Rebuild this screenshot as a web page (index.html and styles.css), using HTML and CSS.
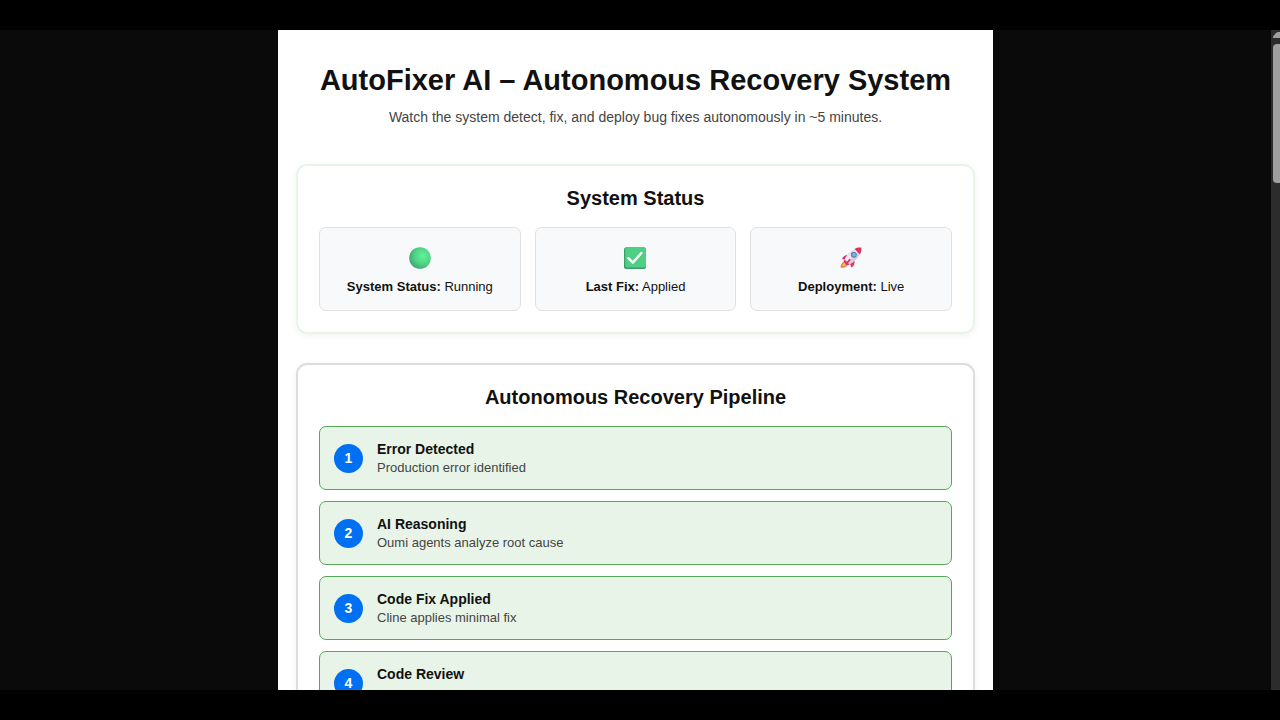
FILE: index.html
```html
<!DOCTYPE html>
<html lang="en">
<head>
  <meta charset="UTF-8">
  <meta name="viewport" content="width=device-width, initial-scale=1.0">
  <title>AutoFixer AI</title>
  <link rel="stylesheet" href="styles.css">
</head>
<body>
  <div class="screen">
    <main class="page">
      <header class="header">
        <h1>AutoFixer AI – Autonomous Recovery System</h1>
        <p>Watch the system detect, fix, and deploy bug fixes autonomously in ~5 minutes.</p>
      </header>

      <section class="card card-status">
        <h2>System Status</h2>
        <div class="status-grid">
          <div class="status-item">
            <svg class="status-icon" viewBox="0 0 24 24" aria-hidden="true">
              <defs>
                <radialGradient id="ball" cx="0.64" cy="0.4" r="0.74">
                  <stop offset="0" stop-color="#62f09a"/>
                  <stop offset="0.5" stop-color="#4fd585"/>
                  <stop offset="0.85" stop-color="#43aa74"/>
                  <stop offset="1" stop-color="#4b8b7c"/>
                </radialGradient>
              </defs>
              <circle cx="12" cy="12" r="10.8" fill="url(#ball)"/>
            </svg>
            <p><strong>System Status:</strong> Running</p>
          </div>
          <div class="status-item">
            <svg class="status-icon" viewBox="0 0 24 24" aria-hidden="true">
              <rect x="1" y="1.2" width="22" height="21.8" rx="2.6" fill="#3d9c6c"/>
              <rect x="2.2" y="1.2" width="20.8" height="20.4" rx="2.2" fill="#4fcf83"/>
              <path d="M5.4 12.2l4.4 4.4 8.6-9.6" fill="none" stroke="#fff" stroke-width="2.4" stroke-linecap="round" stroke-linejoin="round"/>
            </svg>
            <p><strong>Last Fix:</strong> Applied</p>
          </div>
          <div class="status-item">
            <svg class="status-icon" viewBox="0 0 24 24" aria-hidden="true">
              <path d="M5.4 15.6C3 16.2 1.6 18.6 1.6 21.8c3.4 0 6-.8 7-3.4z" fill="#f0803c"/>
              <path d="M5.8 16.6c-1.4.6-2.2 1.8-2.3 3.3 1.7 0 3-.6 3.7-2z" fill="#fbbf55"/>
              <path d="M9.4 9C6.4 8.8 4 10.4 3 13l4 1z" fill="#e0376b"/>
              <path d="M15.4 14.4c.6 3.2-.6 5.8-3 7.2l-1.8-4.6z" fill="#e0376b"/>
              <path d="M21.8 2.2C15 2.4 9 6 5.6 13.4l5 5c7.4-3.6 11-9.4 11.2-16.2z" fill="#dccbe0"/>
              <path d="M21.8 2.2C15.4 3 9.6 6.6 5.6 13.4l2.8 2.8c4-4 9.4-9.2 13.4-14z" fill="#f0e8f3"/>
              <path d="M22.4 1.6c-2.6-.2-4.8.2-6.8 1.4l5.4 5.4c1.2-2 1.6-4.2 1.4-6.8z" fill="#db3459"/>
              <path d="M5.6 13.4l-1 2.4 3.6 3.6 2.4-1z" fill="#d43768"/>
              <path d="M10.6 13.8l-3.4 4" stroke="#e0376b" stroke-width="1.8" stroke-linecap="round"/>
              <circle cx="14.8" cy="8.8" r="3" fill="#5c82b4"/>
              <circle cx="15" cy="8.8" r="1.8" fill="#7eb9e8"/>
            </svg>
            <p><strong>Deployment:</strong> Live</p>
          </div>
        </div>
      </section>

      <section class="card">
        <h2>Autonomous Recovery Pipeline</h2>
        <ol class="pipeline">
          <li class="step">
            <span class="step-number">1</span>
            <div class="step-text">
              <h3>Error Detected</h3>
              <p>Production error identified</p>
            </div>
          </li>
          <li class="step">
            <span class="step-number">2</span>
            <div class="step-text">
              <h3>AI Reasoning</h3>
              <p>Oumi agents analyze root cause</p>
            </div>
          </li>
          <li class="step">
            <span class="step-number">3</span>
            <div class="step-text">
              <h3>Code Fix Applied</h3>
              <p>Cline applies minimal fix</p>
            </div>
          </li>
          <li class="step">
            <span class="step-number">4</span>
            <div class="step-text">
              <h3>Code Review</h3>
            </div>
          </li>
        </ol>
      </section>
    </main>

    <div class="scrollbar" aria-hidden="true">
      <svg class="scroll-arrow" viewBox="0 0 8 8"><path d="M0 7V5.5L3 2Q4 1 5 1h3v6z" fill="#a0a0a0"/></svg>
      <div class="scroll-thumb"></div>
    </div>
  </div>
</body>
</html>
```

FILE: styles.css
```css
* {
  box-sizing: border-box;
}

body {
  margin: 0;
  padding: 30px 0;
  height: 100vh;
  background: #000;
  color: #111;
  font-family: Arial, "Liberation Sans", sans-serif;
  overflow: hidden;
}

h1, h2, h3, p {
  margin: 0;
}

.screen {
  display: flex;
  height: 100%;
  overflow: hidden;
  background: #0a0a0a;
}

.page {
  width: 100%;
  max-width: 715px;
  height: max-content;
  margin: 0 auto;
  padding: 32px 18px;
  background: #fff;
}

.header {
  margin-bottom: 36px;
  text-align: center;
}

.header h1 {
  margin-bottom: 8px;
  font-size: 29px;
  line-height: 36px;
}

.header p {
  color: #444;
  font-size: 14px;
  line-height: 22px;
}

.card {
  margin-bottom: 29px;
  padding: 21px;
  border: 2px solid #ddd;
  border-radius: 11px;
  box-shadow: 0 2px 7px rgba(0, 0, 0, 0.05);
}

.card-status {
  border-color: #e8f4e8;
}

.card h2 {
  margin-bottom: 18px;
  font-size: 20px;
  line-height: 22px;
  text-align: center;
}

.status-grid {
  display: grid;
  grid-template-columns: repeat(3, 1fr);
  gap: 14px;
}

.status-item {
  padding: 18px 14px 13px;
  background: #f8f9fb;
  border: 1px solid #e0e0e0;
  border-radius: 7px;
  text-align: center;
  font-size: 13px;
  line-height: 20px;
}

.status-icon {
  display: block;
  width: 24px;
  height: 24px;
  margin: 0 auto 7px;
}

.pipeline {
  display: flex;
  flex-direction: column;
  gap: 11px;
  margin: 0;
  padding: 0;
  list-style: none;
}

.step {
  display: flex;
  align-items: center;
  gap: 14px;
  min-height: 64px;
  padding: 12px 14px;
  background: #e8f4e8;
  border: 1px solid #57a65b;
  border-radius: 7px;
}

.step-number {
  display: flex;
  align-items: center;
  justify-content: center;
  width: 29px;
  height: 29px;
  border-radius: 50%;
  background: #0070f3;
  color: #fff;
  font-size: 14px;
  font-weight: bold;
}

.step-text {
  align-self: flex-start;
}

.step h3 {
  font-size: 14px;
  line-height: 20px;
}

.step p {
  color: #444;
  font-size: 13px;
  line-height: 18px;
}

.scrollbar {
  width: 9px;
  flex: none;
  padding: 1px 0 0 2px;
  background: #2c2c2c;
  overflow: hidden;
}

.scroll-arrow {
  display: block;
  width: 8px;
  height: 8px;
}

.scroll-thumb {
  height: 139px;
  margin-top: 5px;
  background: #9f9f9f;
  border-radius: 4px 0 0 4px;
}
```
